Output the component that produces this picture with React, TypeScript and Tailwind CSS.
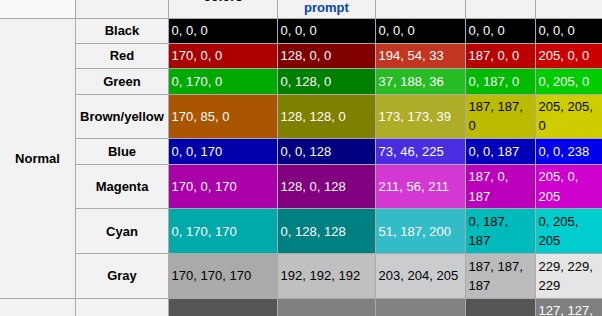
import React from 'react';

type Cell = [string, string, boolean?];
type Row = { name: string; cells: Cell[] };

const normalRows: Row[] = [
  {
    name: 'Black',
    cells: [
      ['0, 0, 0', 'bg-[#000000]'],
      ['0, 0, 0', 'bg-[#000000]'],
      ['0, 0, 0', 'bg-[#000000]'],
      ['0, 0, 0', 'bg-[#000000]'],
      ['0, 0, 0', 'bg-[#000000]'],
    ],
  },
  {
    name: 'Red',
    cells: [
      ['170, 0, 0', 'bg-[#aa0000]'],
      ['128, 0, 0', 'bg-[#800000]'],
      ['194, 54, 33', 'bg-[#c23621]'],
      ['187, 0, 0', 'bg-[#bb0000]'],
      ['205, 0, 0', 'bg-[#cd0000]'],
    ],
  },
  {
    name: 'Green',
    cells: [
      ['0, 170, 0', 'bg-[#00aa00]'],
      ['0, 128, 0', 'bg-[#008000]'],
      ['37, 188, 36', 'bg-[#25bc24]'],
      ['0, 187, 0', 'bg-[#00bb00]'],
      ['0, 205, 0', 'bg-[#00cd00]'],
    ],
  },
  {
    name: 'Brown/yellow',
    cells: [
      ['170, 85, 0', 'bg-[#aa5500]'],
      ['128, 128, 0', 'bg-[#808000]'],
      ['173, 173, 39', 'bg-[#adad27]'],
      ['187, 187, 0', 'bg-[#bbbb00]', true],
      ['205, 205, 0', 'bg-[#cdcd00]', true],
    ],
  },
  {
    name: 'Blue',
    cells: [
      ['0, 0, 170', 'bg-[#0000aa]'],
      ['0, 0, 128', 'bg-[#000080]'],
      ['73, 46, 225', 'bg-[#492ee1]'],
      ['0, 0, 187', 'bg-[#0000bb]'],
      ['0, 0, 238', 'bg-[#0000ee]'],
    ],
  },
  {
    name: 'Magenta',
    cells: [
      ['170, 0, 170', 'bg-[#aa00aa]'],
      ['128, 0, 128', 'bg-[#800080]'],
      ['211, 56, 211', 'bg-[#d338d3]'],
      ['187, 0, 187', 'bg-[#bb00bb]'],
      ['205, 0, 205', 'bg-[#cd00cd]'],
    ],
  },
  {
    name: 'Cyan',
    cells: [
      ['0, 170, 170', 'bg-[#00aaaa]'],
      ['0, 128, 128', 'bg-[#008080]'],
      ['51, 187, 200', 'bg-[#33bbc8]'],
      ['0, 187, 187', 'bg-[#00bbbb]', true],
      ['0, 205, 205', 'bg-[#00cdcd]', true],
    ],
  },
  {
    name: 'Gray',
    cells: [
      ['170, 170, 170', 'bg-[#aaaaaa]', true],
      ['192, 192, 192', 'bg-[#c0c0c0]', true],
      ['203, 204, 205', 'bg-[#cbcccd]', true],
      ['187, 187, 187', 'bg-[#bbbbbb]', true],
      ['229, 229, 229', 'bg-[#e5e5e5]', true],
    ],
  },
];

const brightRows: Row[] = [
  {
    name: 'Dark gray',
    cells: [
      ['85, 85, 85', 'bg-[#555555]'],
      ['128, 128, 128', 'bg-[#808080]'],
      ['129, 131, 131', 'bg-[#818383]'],
      ['85, 85, 85', 'bg-[#555555]'],
      ['127, 127, 127', 'bg-[#7f7f7f]'],
    ],
  },
  {
    name: 'Bright red',
    cells: [
      ['255, 85, 85', 'bg-[#ff5555]'],
      ['255, 0, 0', 'bg-[#ff0000]'],
      ['252, 57, 31', 'bg-[#fc391f]'],
      ['255, 85, 85', 'bg-[#ff5555]'],
      ['255, 0, 0', 'bg-[#ff0000]'],
    ],
  },
  {
    name: 'Bright green',
    cells: [
      ['85, 255, 85', 'bg-[#55ff55]', true],
      ['0, 255, 0', 'bg-[#00ff00]', true],
      ['49, 231, 34', 'bg-[#31e722]', true],
      ['85, 255, 85', 'bg-[#55ff55]', true],
      ['0, 255, 0', 'bg-[#00ff00]', true],
    ],
  },
  {
    name: 'Yellow',
    cells: [
      ['255, 255, 85', 'bg-[#ffff55]', true],
      ['255, 255, 0', 'bg-[#ffff00]', true],
      ['234, 236, 35', 'bg-[#eaec23]', true],
      ['255, 255, 85', 'bg-[#ffff55]', true],
      ['255, 255, 0', 'bg-[#ffff00]', true],
    ],
  },
  {
    name: 'Bright blue',
    cells: [
      ['85, 85, 255', 'bg-[#5555ff]'],
      ['0, 0, 255', 'bg-[#0000ff]'],
      ['88, 51, 255', 'bg-[#5833ff]'],
      ['85, 85, 255', 'bg-[#5555ff]'],
      ['92, 92, 255', 'bg-[#5c5cff]'],
    ],
  },
  {
    name: 'Bright magenta',
    cells: [
      ['255, 85, 255', 'bg-[#ff55ff]'],
      ['255, 0, 255', 'bg-[#ff00ff]'],
      ['249, 53, 248', 'bg-[#f935f8]'],
      ['255, 85, 255', 'bg-[#ff55ff]'],
      ['255, 0, 255', 'bg-[#ff00ff]'],
    ],
  },
  {
    name: 'Bright cyan',
    cells: [
      ['85, 255, 255', 'bg-[#55ffff]', true],
      ['0, 255, 255', 'bg-[#00ffff]', true],
      ['20, 240, 240', 'bg-[#14f0f0]', true],
      ['85, 255, 255', 'bg-[#55ffff]', true],
      ['0, 255, 255', 'bg-[#00ffff]', true],
    ],
  },
  {
    name: 'White',
    cells: [
      ['255, 255, 255', 'bg-[#ffffff]', true],
      ['255, 255, 255', 'bg-[#ffffff]', true],
      ['233, 235, 235', 'bg-[#e9ebeb]', true],
      ['255, 255, 255', 'bg-[#ffffff]', true],
      ['255, 255, 255', 'bg-[#ffffff]', true],
    ],
  },
];

const th =
  'bg-[#f2f2f2] font-bold text-black text-center flex items-center justify-center px-[2.6px] py-[2.4px]';

const hd =
  'bg-[#f2f2f2] font-bold text-black text-center flex items-end justify-center px-[2.6px] pt-[2.4px]';

function Group({ label, rows }: { label: string; rows: Row[] }) {
  return (
    <>
      <div className={`${th} row-span-8`}>{label}</div>
      {rows.map((r) => (
        <React.Fragment key={r.name}>
          <div className={th}>{r.name}</div>
          {r.cells.map(([v, bg, dark], i) => (
            <div
              key={i}
              className={`${bg} ${dark ? 'text-black' : 'text-white'} flex items-center px-[2.6px] py-[2.4px]`}
            >
              <span>{v}</span>
            </div>
          ))}
        </React.Fragment>
      ))}
    </>
  );
}

export default function App() {
  return (
    <div className="w-[602px] h-[316px] overflow-hidden bg-white font-['Liberation_Sans',Arial,sans-serif] text-[13px] leading-[19.5px]">
      <div className="-mt-[43.2px] grid w-max grid-cols-[75px_92px_108px_97px_89px_69px_69px] gap-px bg-[#aaaaaa]">
        <div className="bg-[#f9f9f9]" />
        <div className={`${hd} pb-[19.5px]`}>Name</div>
        <div className={`${hd} pb-[11.5px]`}>Standard VGA colors</div>
        <div className={`${hd} pb-0`}>
          <span>
            Windows XP <a className="text-[#0645ad]">command prompt</a>
          </span>
        </div>
        <div className={`${hd} pb-[19.5px]`}>Terminal.app</div>
        <div className={`${hd} pb-[19.5px]`}>PuTTY</div>
        <div className={`${hd} pb-[19.5px]`}>xterm</div>
        <Group label="Normal" rows={normalRows} />
        <Group label="Bright" rows={brightRows} />
      </div>
    </div>
  );
}
